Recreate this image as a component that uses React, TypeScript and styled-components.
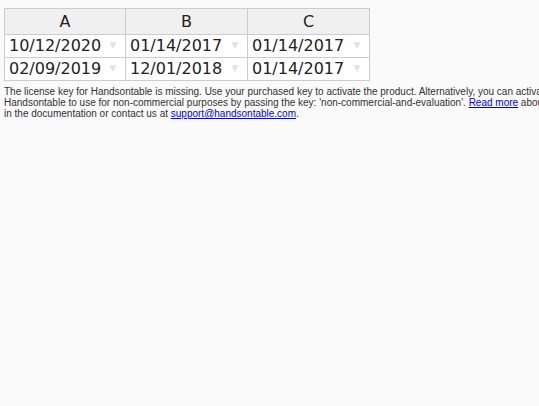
import React from "react";
import styled, { createGlobalStyle } from "styled-components";

const Global = createGlobalStyle`
  html, body {
    margin: 0;
    padding: 0;
    background: #fafafa;
    overflow: hidden;
  }
`;

const Page = styled.div`
  padding: 8px 0 0 4px;
  width: 600px;
`;

const Grid = styled.table`
  border-collapse: separate;
  border-spacing: 0;
  border-top: 1px solid #ccc;
  border-left: 1px solid #ccc;
  font-family: "DejaVu Sans", Verdana, sans-serif;
  font-size: 16px;
  color: #222;
  table-layout: fixed;
`;

const HeadCell = styled.th<{ $w: number }>`
  width: ${(p) => p.$w}px;
  height: 25px;
  padding: 0 4px;
  box-sizing: border-box;
  background: #f0f0f0;
  border-right: 1px solid #ccc;
  border-bottom: 1px solid #ccc;
  font-weight: normal;
  text-align: center;
  line-height: 25px;
  color: #222;
`;

const Cell = styled.td`
  height: 22px;
  padding: 0 4px;
  background: #fff;
  border-right: 1px solid #ccc;
  border-bottom: 1px solid #ccc;
  line-height: 21px;
  white-space: nowrap;
  overflow: hidden;
  vertical-align: top;
`;

const Arrow = styled.span`
  float: right;
  width: 16px;
  text-align: center;
  font-size: 9px;
  color: #e2e2e2;
`;

const License = styled.div`
  width: 555px;
  padding: 5px 0 3px 0;
  font-family: "Liberation Sans", Arial, Helvetica, sans-serif;
  font-size: 10px;
  color: #323232;
  text-align: left;
`;

const Link = styled.a`
  color: #0000ee;
  text-decoration: underline;
`;

const cols = [
  { name: "A", w: 121 },
  { name: "B", w: 122 },
  { name: "C", w: 122 },
];

const rows = [
  ["10/12/2020", "01/14/2017", "01/14/2017"],
  ["02/09/2019", "12/01/2018", "01/14/2017"],
];

export default function App() {
  return (
    <>
      <Global />
      <Page>
        <Grid>
          <thead>
            <tr>
              {cols.map((c) => (
                <HeadCell key={c.name} $w={c.w}>
                  {c.name}
                </HeadCell>
              ))}
            </tr>
          </thead>
          <tbody>
            {rows.map((r, i) => (
              <tr key={i}>
                {r.map((v, j) => (
                  <Cell key={j}>
                    <Arrow>▼</Arrow>
                    {v}
                  </Cell>
                ))}
              </tr>
            ))}
          </tbody>
        </Grid>
        <License>
          The license key for Handsontable is missing. Use your purchased key to
          activate the product. Alternatively, you can activate Handsontable to
          use for non-commercial purposes by passing the key:
          'non-commercial-and-evaluation'. <Link href="#">Read more</Link> about
          it in the documentation or contact us at{" "}
          <Link href="#">support@handsontable.com</Link>.
        </License>
      </Page>
    </>
  );
}
